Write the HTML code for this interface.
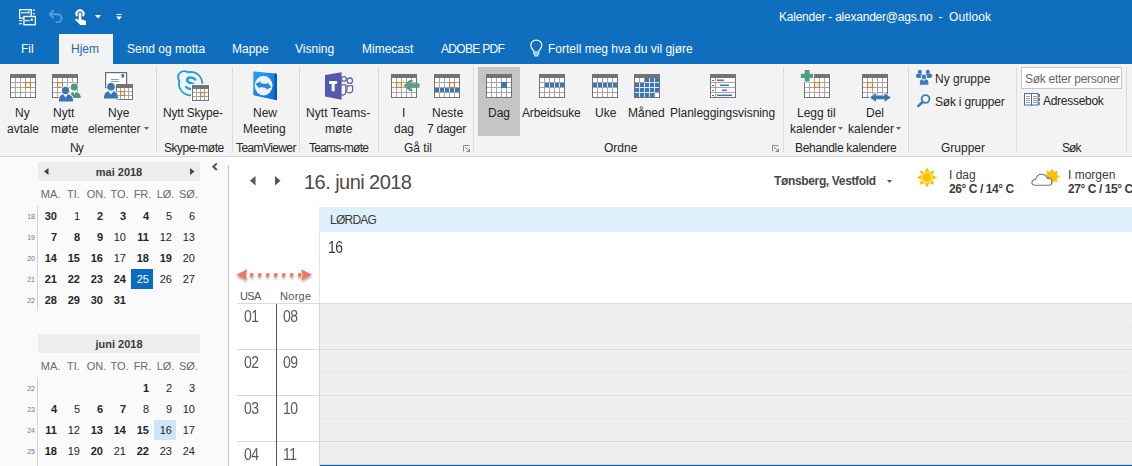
<!DOCTYPE html>
<html><head><meta charset="utf-8">
<style>
*{margin:0;padding:0;box-sizing:border-box}
html,body{width:1132px;height:466px;overflow:hidden;background:#fff;font-family:"Liberation Sans",sans-serif;font-size:12px;color:#262626}
.a{position:absolute;white-space:nowrap;line-height:1}
svg{overflow:visible}
</style></head><body>
<div style="position:absolute;left:0px;top:0px;width:1132px;height:64px;background:#106EBE;"></div>
<div style="position:absolute;left:59px;top:34px;width:54px;height:30px;background:#F3F3F3;"></div>
<div class="a" style="left:779px;top:11px;font-size:12px;color:#fff;letter-spacing:-0.23px">Kalender - alexander@ags.no</div>
<div class="a" style="left:938.5px;top:11px;font-size:12px;color:#fff">-</div>
<div class="a" style="left:949px;top:11px;font-size:12px;color:#fff;letter-spacing:0.1px">Outlook</div>
<div class="a" style="left:21px;top:43px;font-size:12px;color:#fff">Fil</div>
<div class="a" style="left:127px;top:43px;font-size:12px;color:#fff">Send og motta</div>
<div class="a" style="left:232px;top:43px;font-size:12px;color:#fff">Mappe</div>
<div class="a" style="left:295px;top:43px;font-size:12px;color:#fff">Visning</div>
<div class="a" style="left:362px;top:43px;font-size:12px;color:#fff">Mimecast</div>
<div class="a" style="left:441px;top:43px;font-size:12px;color:#fff;letter-spacing:-0.7px">ADOBE PDF</div>
<div class="a" style="left:548px;top:43px;font-size:12px;color:#fff">Fortell meg hva du vil gjøre</div>
<div class="a" style="left:71px;top:43px;font-size:12px;color:#2866B0">Hjem</div>
<svg style="position:absolute;left:19px;top:9px" width="17" height="16" viewBox="0 0 17 16"><rect x="0.65" y="0.65" width="11.6" height="8.5" fill="none" stroke="#fff" stroke-width="1.3"/>
<rect x="4.95" y="7.45" width="11.4" height="8.3" fill="#106EBE" stroke="#fff" stroke-width="1.3"/>
<g fill="#fff"><rect x="2.1" y="3.2" width="5.9" height="1.1"/><rect x="8.5" y="2.3" width="2.1" height="2.2"/>
<rect x="13.8" y="0.6" width="2.1" height="1.1"/><rect x="13.8" y="4.2" width="2.1" height="1.1"/>
<rect x="5.8" y="11.1" width="4.8" height="1.1"/><rect x="11.7" y="9.6" width="2.1" height="2.2"/>
<rect x="0" y="11.1" width="3.2" height="1.1"/><rect x="0" y="14.2" width="3.2" height="1.1"/></g></svg>
<svg style="position:absolute;left:0px;top:0px" width="1" height="1" viewBox="0 0 1 1"><path d="M53.9 10 L49.7 14.2 L53.7 18.3 M50 14.2 H57.6 A3.95 3.95 0 0 1 57.6 22.1 H55.8" fill="none" stroke="#4F9DE2" stroke-width="1.9"/></svg>
<svg style="position:absolute;left:74px;top:8px" width="14" height="18" viewBox="0 0 14 18"><path d="M3.4 8.2 A3.5 3.5 0 1 1 8.6 8.2" fill="none" stroke="#fff" stroke-width="2"/><rect x="3.9" y="3.7" width="4.2" height="9.5" rx="2" fill="#106EBE"/><rect x="4.7" y="4.5" width="2.6" height="9" rx="1.3" fill="#fff"/><path d="M0.9 11.4 Q1.8 10.3 2.9 11 L4.7 12.4 V11 H7.3 V11.6 L11.2 12.4 Q12 12.6 12 13.6 V17 H6.3 Z" fill="#fff"/></svg>
<svg style="position:absolute;left:95px;top:15px" width="6" height="4" viewBox="0 0 6 4"><path d="M0 0 H6 L3 3.5 Z" fill="#fff"/></svg>
<svg style="position:absolute;left:116px;top:14px" width="6" height="7" viewBox="0 0 6 7"><rect x="0.5" y="0" width="5" height="1" fill="#fff"/><path d="M0 2.5 H6 L3 6 Z" fill="#fff"/></svg>
<div style="position:absolute;left:0px;top:64px;width:1132px;height:92px;background:#F3F3F3;"></div>
<div style="position:absolute;left:0px;top:156px;width:1132px;height:1px;background:#D5D5D5;"></div>
<div style="position:absolute;left:156px;top:67px;width:1px;height:85px;background:#DCDCDC;"></div>
<div style="position:absolute;left:232px;top:67px;width:1px;height:85px;background:#DCDCDC;"></div>
<div style="position:absolute;left:299px;top:67px;width:1px;height:85px;background:#DCDCDC;"></div>
<div style="position:absolute;left:378px;top:67px;width:1px;height:85px;background:#DCDCDC;"></div>
<div style="position:absolute;left:473px;top:67px;width:1px;height:85px;background:#DCDCDC;"></div>
<div style="position:absolute;left:783px;top:67px;width:1px;height:85px;background:#DCDCDC;"></div>
<div style="position:absolute;left:908px;top:67px;width:1px;height:85px;background:#DCDCDC;"></div>
<div style="position:absolute;left:1016px;top:67px;width:1px;height:85px;background:#DCDCDC;"></div>
<div style="position:absolute;left:1126px;top:67px;width:1px;height:85px;background:#DCDCDC;"></div>
<div class="a" style="left:15px;top:107px;font-size:12px;color:#262626">Ny</div>
<div class="a" style="left:7px;top:123px;font-size:12px;color:#262626">avtale</div>
<div class="a" style="left:53px;top:107px;font-size:12px;color:#262626">Nytt</div>
<div class="a" style="left:51px;top:123px;font-size:12px;color:#262626">møte</div>
<div class="a" style="left:108px;top:107px;font-size:12px;color:#262626">Nye</div>
<div class="a" style="left:88px;top:123px;font-size:12px;color:#262626;letter-spacing:-0.1px">elementer</div>
<svg style="position:absolute;left:144px;top:127px" width="5" height="3" viewBox="0 0 5 3"><path d="M0 0 H5 L2.5 3 Z" fill="#6A6A6A"/></svg>
<div class="a" style="left:70px;top:142px;font-size:12px;color:#262626;letter-spacing:-1px">Ny</div>
<div class="a" style="left:163px;top:107px;font-size:12px;color:#262626;letter-spacing:-0.2px">Nytt Skype-</div>
<div class="a" style="left:180px;top:123px;font-size:12px;color:#262626">møte</div>
<div class="a" style="left:164px;top:142px;font-size:12px;color:#262626;letter-spacing:-0.5px">Skype-møte</div>
<div class="a" style="left:253px;top:107px;font-size:12px;color:#262626">New</div>
<div class="a" style="left:243px;top:123px;font-size:12px;color:#262626">Meeting</div>
<div class="a" style="left:236px;top:142px;font-size:12px;color:#262626;letter-spacing:-0.6px">TeamViewer</div>
<div class="a" style="left:306px;top:107px;font-size:12px;color:#262626;letter-spacing:0.05px">Nytt Teams-</div>
<div class="a" style="left:325px;top:123px;font-size:12px;color:#262626">møte</div>
<div class="a" style="left:309px;top:142px;font-size:12px;color:#262626;letter-spacing:-0.75px">Teams-møte</div>
<div class="a" style="left:402px;top:107px;font-size:12px;color:#262626">I</div>
<div class="a" style="left:394px;top:123px;font-size:12px;color:#262626">dag</div>
<div class="a" style="left:432px;top:107px;font-size:12px;color:#262626">Neste</div>
<div class="a" style="left:427px;top:123px;font-size:12px;color:#262626;letter-spacing:-0.25px">7 dager</div>
<div class="a" style="left:404px;top:142px;font-size:12px;color:#262626">Gå til</div>
<div style="position:absolute;left:478px;top:67px;width:42px;height:69px;background:#C5C5C5;"></div>
<div class="a" style="left:488px;top:107px;font-size:12px;color:#262626">Dag</div>
<div class="a" style="left:522px;top:107px;font-size:12px;color:#262626;letter-spacing:-0.15px">Arbeidsuke</div>
<div class="a" style="left:595px;top:107px;font-size:12px;color:#262626">Uke</div>
<div class="a" style="left:628px;top:107px;font-size:12px;color:#262626">Måned</div>
<div class="a" style="left:670px;top:107px;font-size:12px;color:#262626;letter-spacing:-0.05px">Planleggingsvisning</div>
<div class="a" style="left:604px;top:142px;font-size:12px;color:#262626">Ordne</div>
<div class="a" style="left:797px;top:107px;font-size:12px;color:#262626">Legg til</div>
<div class="a" style="left:790px;top:123px;font-size:12px;color:#262626">kalender</div>
<svg style="position:absolute;left:838px;top:127px" width="5" height="3" viewBox="0 0 5 3"><path d="M0 0 H5 L2.5 3 Z" fill="#6A6A6A"/></svg>
<div class="a" style="left:866px;top:107px;font-size:12px;color:#262626">Del</div>
<div class="a" style="left:848px;top:123px;font-size:12px;color:#262626">kalender</div>
<svg style="position:absolute;left:896px;top:127px" width="5" height="3" viewBox="0 0 5 3"><path d="M0 0 H5 L2.5 3 Z" fill="#6A6A6A"/></svg>
<div class="a" style="left:795px;top:142px;font-size:12px;color:#262626;letter-spacing:-0.3px">Behandle kalendere</div>
<div class="a" style="left:935px;top:73px;font-size:12px;color:#262626">Ny gruppe</div>
<div class="a" style="left:935px;top:96px;font-size:12px;color:#262626;letter-spacing:-0.2px">Søk i grupper</div>
<div class="a" style="left:941px;top:142px;font-size:12px;color:#262626">Grupper</div>
<div style="position:absolute;left:1021px;top:67px;width:101px;height:22px;background:#fff;border:1px solid #C6C6C6"></div>
<div class="a" style="left:1025px;top:73px;font-size:12px;color:#6A6A6A;letter-spacing:-0.27px">Søk etter personer</div>
<div class="a" style="left:1043px;top:95px;font-size:12px;color:#262626;letter-spacing:-0.28px">Adressebok</div>
<div class="a" style="left:1062px;top:142px;font-size:12px;color:#262626;letter-spacing:-0.9px">Søk</div>
<svg style="position:absolute;left:463px;top:145px" width="7" height="7" viewBox="0 0 7 7"><path d="M0.5 6.5 V0.5 H6.5" fill="none" stroke="#8A8A8A"/><path d="M2 2 L6.5 6.5 M3.5 6.5 H6.5 V3.5" fill="none" stroke="#8A8A8A"/></svg>
<svg style="position:absolute;left:772px;top:145px" width="7" height="7" viewBox="0 0 7 7"><path d="M0.5 6.5 V0.5 H6.5" fill="none" stroke="#8A8A8A"/><path d="M2 2 L6.5 6.5 M3.5 6.5 H6.5 V3.5" fill="none" stroke="#8A8A8A"/></svg>
<svg style="position:absolute;left:10px;top:74px" width="26" height="24" viewBox="0 0 26 24"><rect x="0" y="0" width="26" height="24" fill="#fff"/><rect x="5" y="4" width="1" height="20" fill="#A6A6A6"/><rect x="10" y="4" width="1" height="20" fill="#A6A6A6"/><rect x="15" y="4" width="1" height="20" fill="#A6A6A6"/><rect x="20" y="4" width="1" height="20" fill="#A6A6A6"/><rect x="0" y="8" width="26" height="1" fill="#A6A6A6"/><rect x="0" y="13" width="26" height="1" fill="#A6A6A6"/><rect x="0" y="18" width="26" height="1" fill="#A6A6A6"/><rect x="0.5" y="0.5" width="25" height="23" fill="none" stroke="#737373"/><rect x="0" y="0" width="26" height="4" fill="#737373"/><rect x="15.55" y="8.55" width="4.9" height="4.9" fill="#FFF6E6" stroke="#CF7F3A" stroke-width="1.1"/></svg>
<svg style="position:absolute;left:52px;top:74px" width="26" height="24" viewBox="0 0 26 24"><rect x="0" y="0" width="26" height="24" fill="#fff"/><rect x="5" y="4" width="1" height="20" fill="#A6A6A6"/><rect x="10" y="4" width="1" height="20" fill="#A6A6A6"/><rect x="15" y="4" width="1" height="20" fill="#A6A6A6"/><rect x="20" y="4" width="1" height="20" fill="#A6A6A6"/><rect x="0" y="8" width="26" height="1" fill="#A6A6A6"/><rect x="0" y="13" width="26" height="1" fill="#A6A6A6"/><rect x="0" y="18" width="26" height="1" fill="#A6A6A6"/><rect x="0.5" y="0.5" width="25" height="23" fill="none" stroke="#737373"/><rect x="0" y="0" width="26" height="4" fill="#737373"/><rect x="5.55" y="8.55" width="4.9" height="4.9" fill="#FFF6E6" stroke="#CF7F3A" stroke-width="1.1"/>
<circle cx="22.3" cy="12.9" r="4.4" fill="#F3F3F3"/><path d="M17.1 25 C17.1 20 18.8 17 21.3 17 H23.7 C26.5 17 29.9 19.5 29.9 25 Z" fill="#F3F3F3"/>
<circle cx="22.3" cy="12.9" r="3.5" fill="#4A9A7C"/><path d="M18.1 24.1 C18.1 20.5 19.5 18 21.3 18 L22.5 20.5 L23.7 18 C26 18 28.9 20 28.9 24.1 Z" fill="#4A9A7C"/>
<circle cx="13.5" cy="16.4" r="4.6" fill="#F3F3F3"/><path d="M5.9 28.6 C5.9 22.5 8 19.6 11.2 19.6 H15.8 C19.5 19.6 22.2 22.5 22.2 28.6 Z" fill="#F3F3F3"/>
<circle cx="13.5" cy="16.4" r="3.6" fill="#3A75B5"/><path d="M6.9 27.6 C6.9 23 8.5 20.6 11.2 20.6 L13.5 23.6 L15.8 20.6 C18.8 20.6 21.2 23 21.2 27.6 Z" fill="#3A75B5"/></svg>
<svg style="position:absolute;left:104px;top:71px" width="30" height="30" viewBox="0 0 30 30"><rect x="1.6" y="1.6" width="21" height="15" fill="#fff" stroke="#6A6A6A" stroke-width="1.2"/>
<rect x="17.5" y="3" width="2.6" height="3.6" fill="#3A75B5"/><rect x="7" y="8" width="8" height="1" fill="#9A9A9A"/><rect x="7" y="10" width="8" height="1" fill="#9A9A9A"/>
<g transform="translate(12,13)"><rect x="0" y="0" width="17" height="16" fill="#fff"/><rect x="4" y="4" width="1" height="12" fill="#A6A6A6"/><rect x="8" y="4" width="1" height="12" fill="#A6A6A6"/><rect x="12" y="4" width="1" height="12" fill="#A6A6A6"/><rect x="0" y="7" width="17" height="1" fill="#A6A6A6"/><rect x="0" y="11" width="17" height="1" fill="#A6A6A6"/><rect x="0.5" y="0.5" width="16" height="15" fill="none" stroke="#737373"/><rect x="0" y="0" width="17" height="4" fill="#737373"/><rect x="4.55" y="7.55" width="3.9" height="3.9" fill="#FFF6E6" stroke="#CF7F3A" stroke-width="1.1"/></g>
<circle cx="7" cy="15.7" r="4.6" fill="#F3F3F3"/><path d="M-1 28.4 C-1 22.5 1.2 19.6 4.6 19.6 H9.4 C12.8 19.6 15 22.5 15 28.4 Z" fill="#F3F3F3"/>
<circle cx="7" cy="15.7" r="3.8" fill="#3A75B5"/><path d="M0 27.5 C0 23 1.8 20.6 4.6 20.6 L7 23.6 L9.4 20.6 C12.2 20.6 14 23 14 27.5 Z" fill="#3A75B5"/></svg>
<svg style="position:absolute;left:177px;top:70px" width="32" height="32" viewBox="0 0 32 32"><g fill="none" stroke="#1AA0E0" stroke-width="1.9"><circle cx="13.6" cy="13.6" r="11.6"/><circle cx="7.3" cy="7.3" r="6.2"/><circle cx="19.9" cy="19.9" r="6.2"/></g>
<g fill="#F3F3F3"><circle cx="13.6" cy="13.6" r="10.65"/><circle cx="7.3" cy="7.3" r="5.25"/><circle cx="19.9" cy="19.9" r="5.25"/></g>
<path d="M18.2 9.6 C16.2 6.6 10 6.8 10 10.3 C10 13.6 18 12.6 18 16.2 C18 19.8 11.5 19.8 9.2 17" fill="none" stroke="#1AA0E0" stroke-width="2.4" stroke-linecap="round"/>
<g transform="translate(15,15)"><rect x="-1" y="-1" width="19" height="18" fill="#fff"/><rect x="0" y="0" width="17" height="16" fill="#fff"/><rect x="4" y="4" width="1" height="12" fill="#A6A6A6"/><rect x="8" y="4" width="1" height="12" fill="#A6A6A6"/><rect x="12" y="4" width="1" height="12" fill="#A6A6A6"/><rect x="0" y="7" width="17" height="1" fill="#A6A6A6"/><rect x="0" y="11" width="17" height="1" fill="#A6A6A6"/><rect x="0.5" y="0.5" width="16" height="15" fill="none" stroke="#737373"/><rect x="0" y="0" width="17" height="4" fill="#737373"/><rect x="8.55" y="7.55" width="3.9" height="3.9" fill="#FFF6E6" stroke="#CF7F3A" stroke-width="1.1"/></g></svg>
<svg style="position:absolute;left:250px;top:70px" width="30" height="32" viewBox="0 0 30 32"><defs><linearGradient id="tvg" x1="0" y1="0" x2="1" y2="1"><stop offset="0" stop-color="#2AA4F0"/><stop offset="1" stop-color="#0A66D2"/></linearGradient></defs>
<path d="M3.2 1.3 L25.8 3.6 Q27 3.7 27 5 V29 Q27 30.4 25.7 30.1 L4.4 25.4 Q3.3 25.2 3.3 24 V2.4 Q3.3 1.2 3.2 1.3 Z" fill="url(#tvg)"/>
<path d="M24.6 3.4 L25.8 3.6 Q27 3.7 27 5 V29 Q27 30.4 25.7 30.1 L24.6 29.9 Z" fill="#0757B8"/>
<ellipse cx="13.6" cy="15.6" rx="8.9" ry="9.8" fill="#EDF2F8"/>
<path d="M5.4 15.1 L10.2 11.6 V13.6 H16.8 V11.9 L21.6 16.2 L16.7 19.4 V17.5 H10.2 V19.3 Z" fill="#2A86D6" transform="rotate(7 13.5 15.5)"/></svg>
<svg style="position:absolute;left:324px;top:72px" width="30" height="29" viewBox="0 0 30 29"><g fill="#fff" stroke="#6264A7" stroke-width="1.3">
<path d="M23.4 13.9 H28.6 V17.6 Q28.6 20.9 25.6 20.9 Q23.4 20.9 22.6 19.5 Z"/>
<circle cx="25.8" cy="8.7" r="2.7"/>
<path d="M16 12.8 H21.8 V19.5 Q21.8 23 18 23 Q16.5 23 15.5 22.3 Z"/>
<circle cx="19.9" cy="6.9" r="2.3"/></g>
<path d="M1 3 L17.6 0.2 V27.7 L1 24.6 Z" fill="#5558AF"/>
<path d="M5.1 9.1 H13.1 V12 H10.7 V19.2 H7.6 V12 H5.1 Z" fill="#fff"/></svg>
<svg style="position:absolute;left:391px;top:74px" width="26" height="24" viewBox="0 0 26 24"><rect x="0" y="0" width="26" height="24" fill="#fff"/><rect x="5" y="4" width="1" height="20" fill="#A6A6A6"/><rect x="10" y="4" width="1" height="20" fill="#A6A6A6"/><rect x="15" y="4" width="1" height="20" fill="#A6A6A6"/><rect x="20" y="4" width="1" height="20" fill="#A6A6A6"/><rect x="0" y="8" width="26" height="1" fill="#A6A6A6"/><rect x="0" y="13" width="26" height="1" fill="#A6A6A6"/><rect x="0" y="18" width="26" height="1" fill="#A6A6A6"/><rect x="0.5" y="0.5" width="25" height="23" fill="none" stroke="#737373"/><rect x="0" y="0" width="26" height="4" fill="#737373"/><rect x="5.55" y="8.55" width="4.9" height="4.9" fill="#FFF6E6" stroke="#CF7F3A" stroke-width="1.1"/><path d="M12.5 11.5 L18.5 6 H22.5 L19 9.3 H28.5 V13.7 H19 L22.5 17 H18.5 Z" fill="#5A9E86"/></svg>
<svg style="position:absolute;left:434px;top:74px" width="26" height="24" viewBox="0 0 26 24"><rect x="0" y="0" width="26" height="24" fill="#fff"/><rect x="1" y="14" width="4" height="4" fill="#3B76B6"/><rect x="6" y="14" width="4" height="4" fill="#3B76B6"/><rect x="11" y="14" width="4" height="4" fill="#3B76B6"/><rect x="16" y="14" width="4" height="4" fill="#3B76B6"/><rect x="21" y="14" width="4" height="4" fill="#3B76B6"/><rect x="5" y="4" width="1" height="20" fill="#A6A6A6"/><rect x="10" y="4" width="1" height="20" fill="#A6A6A6"/><rect x="15" y="4" width="1" height="20" fill="#A6A6A6"/><rect x="20" y="4" width="1" height="20" fill="#A6A6A6"/><rect x="0" y="8" width="26" height="1" fill="#A6A6A6"/><rect x="0" y="13" width="26" height="1" fill="#A6A6A6"/><rect x="0" y="18" width="26" height="1" fill="#A6A6A6"/><rect x="5" y="14" width="1" height="4" fill="#DDE8F3"/><rect x="10" y="14" width="1" height="4" fill="#DDE8F3"/><rect x="15" y="14" width="1" height="4" fill="#DDE8F3"/><rect x="20" y="14" width="1" height="4" fill="#DDE8F3"/><rect x="0.5" y="0.5" width="25" height="23" fill="none" stroke="#737373"/><rect x="0" y="0" width="26" height="4" fill="#737373"/><rect x="15.55" y="8.55" width="4.9" height="4.9" fill="#FFF6E6" stroke="#CF7F3A" stroke-width="1.1"/></svg>
<svg style="position:absolute;left:486px;top:74px" width="26" height="24" viewBox="0 0 26 24"><rect x="0" y="0" width="26" height="24" fill="#fff"/><rect x="5" y="4" width="1" height="20" fill="#A6A6A6"/><rect x="10" y="4" width="1" height="20" fill="#A6A6A6"/><rect x="15" y="4" width="1" height="20" fill="#A6A6A6"/><rect x="20" y="4" width="1" height="20" fill="#A6A6A6"/><rect x="0" y="8" width="26" height="1" fill="#A6A6A6"/><rect x="0" y="13" width="26" height="1" fill="#A6A6A6"/><rect x="0" y="18" width="26" height="1" fill="#A6A6A6"/><rect x="0.5" y="0.5" width="25" height="23" fill="none" stroke="#737373"/><rect x="0" y="0" width="26" height="4" fill="#737373"/><rect x="15" y="8" width="6" height="6" fill="#3B76B6"/></svg>
<svg style="position:absolute;left:539px;top:74px" width="26" height="24" viewBox="0 0 26 24"><rect x="0" y="0" width="26" height="24" fill="#fff"/><rect x="6" y="9" width="4" height="4" fill="#3B76B6"/><rect x="11" y="9" width="4" height="4" fill="#3B76B6"/><rect x="16" y="9" width="4" height="4" fill="#3B76B6"/><rect x="21" y="9" width="4" height="4" fill="#3B76B6"/><rect x="5" y="4" width="1" height="20" fill="#A6A6A6"/><rect x="10" y="4" width="1" height="20" fill="#A6A6A6"/><rect x="15" y="4" width="1" height="20" fill="#A6A6A6"/><rect x="20" y="4" width="1" height="20" fill="#A6A6A6"/><rect x="0" y="8" width="26" height="1" fill="#A6A6A6"/><rect x="0" y="13" width="26" height="1" fill="#A6A6A6"/><rect x="0" y="18" width="26" height="1" fill="#A6A6A6"/><rect x="10" y="9" width="1" height="4" fill="#DDE8F3"/><rect x="15" y="9" width="1" height="4" fill="#DDE8F3"/><rect x="20" y="9" width="1" height="4" fill="#DDE8F3"/><rect x="0.5" y="0.5" width="25" height="23" fill="none" stroke="#737373"/><rect x="0" y="0" width="26" height="4" fill="#737373"/></svg>
<svg style="position:absolute;left:592px;top:74px" width="26" height="24" viewBox="0 0 26 24"><rect x="0" y="0" width="26" height="24" fill="#fff"/><rect x="1" y="9" width="4" height="4" fill="#3B76B6"/><rect x="6" y="9" width="4" height="4" fill="#3B76B6"/><rect x="11" y="9" width="4" height="4" fill="#3B76B6"/><rect x="16" y="9" width="4" height="4" fill="#3B76B6"/><rect x="21" y="9" width="4" height="4" fill="#3B76B6"/><rect x="5" y="4" width="1" height="20" fill="#A6A6A6"/><rect x="10" y="4" width="1" height="20" fill="#A6A6A6"/><rect x="15" y="4" width="1" height="20" fill="#A6A6A6"/><rect x="20" y="4" width="1" height="20" fill="#A6A6A6"/><rect x="0" y="8" width="26" height="1" fill="#A6A6A6"/><rect x="0" y="13" width="26" height="1" fill="#A6A6A6"/><rect x="0" y="18" width="26" height="1" fill="#A6A6A6"/><rect x="5" y="9" width="1" height="4" fill="#DDE8F3"/><rect x="10" y="9" width="1" height="4" fill="#DDE8F3"/><rect x="15" y="9" width="1" height="4" fill="#DDE8F3"/><rect x="20" y="9" width="1" height="4" fill="#DDE8F3"/><rect x="0.5" y="0.5" width="25" height="23" fill="none" stroke="#737373"/><rect x="0" y="0" width="26" height="4" fill="#737373"/></svg>
<svg style="position:absolute;left:634px;top:74px" width="26" height="24" viewBox="0 0 26 24"><rect x="0" y="0" width="26" height="24" fill="#fff"/><rect x="11" y="4" width="4" height="4" fill="#3B76B6"/><rect x="16" y="4" width="4" height="4" fill="#3B76B6"/><rect x="21" y="4" width="4" height="4" fill="#3B76B6"/><rect x="1" y="9" width="4" height="4" fill="#3B76B6"/><rect x="6" y="9" width="4" height="4" fill="#3B76B6"/><rect x="11" y="9" width="4" height="4" fill="#3B76B6"/><rect x="16" y="9" width="4" height="4" fill="#3B76B6"/><rect x="21" y="9" width="4" height="4" fill="#3B76B6"/><rect x="1" y="14" width="4" height="4" fill="#3B76B6"/><rect x="6" y="14" width="4" height="4" fill="#3B76B6"/><rect x="11" y="14" width="4" height="4" fill="#3B76B6"/><rect x="16" y="14" width="4" height="4" fill="#3B76B6"/><rect x="21" y="14" width="4" height="4" fill="#3B76B6"/><rect x="1" y="19" width="4" height="4" fill="#3B76B6"/><rect x="6" y="19" width="4" height="4" fill="#3B76B6"/><rect x="11" y="19" width="4" height="4" fill="#3B76B6"/><rect x="16" y="19" width="4" height="4" fill="#3B76B6"/><rect x="5" y="4" width="1" height="20" fill="#A6A6A6"/><rect x="10" y="4" width="1" height="20" fill="#A6A6A6"/><rect x="15" y="4" width="1" height="20" fill="#A6A6A6"/><rect x="20" y="4" width="1" height="20" fill="#A6A6A6"/><rect x="0" y="8" width="26" height="1" fill="#A6A6A6"/><rect x="0" y="13" width="26" height="1" fill="#A6A6A6"/><rect x="0" y="18" width="26" height="1" fill="#A6A6A6"/><rect x="15" y="4" width="1" height="4" fill="#DDE8F3"/><rect x="11" y="8" width="4" height="1" fill="#DDE8F3"/><rect x="15" y="8" width="1" height="1" fill="#DDE8F3"/><rect x="20" y="4" width="1" height="4" fill="#DDE8F3"/><rect x="16" y="8" width="4" height="1" fill="#DDE8F3"/><rect x="20" y="8" width="1" height="1" fill="#DDE8F3"/><rect x="21" y="8" width="4" height="1" fill="#DDE8F3"/><rect x="5" y="9" width="1" height="4" fill="#DDE8F3"/><rect x="1" y="13" width="4" height="1" fill="#DDE8F3"/><rect x="5" y="13" width="1" height="1" fill="#DDE8F3"/><rect x="10" y="9" width="1" height="4" fill="#DDE8F3"/><rect x="6" y="13" width="4" height="1" fill="#DDE8F3"/><rect x="10" y="13" width="1" height="1" fill="#DDE8F3"/><rect x="15" y="9" width="1" height="4" fill="#DDE8F3"/><rect x="11" y="13" width="4" height="1" fill="#DDE8F3"/><rect x="15" y="13" width="1" height="1" fill="#DDE8F3"/><rect x="20" y="9" width="1" height="4" fill="#DDE8F3"/><rect x="16" y="13" width="4" height="1" fill="#DDE8F3"/><rect x="20" y="13" width="1" height="1" fill="#DDE8F3"/><rect x="21" y="13" width="4" height="1" fill="#DDE8F3"/><rect x="5" y="14" width="1" height="4" fill="#DDE8F3"/><rect x="1" y="18" width="4" height="1" fill="#DDE8F3"/><rect x="5" y="18" width="1" height="1" fill="#DDE8F3"/><rect x="10" y="14" width="1" height="4" fill="#DDE8F3"/><rect x="6" y="18" width="4" height="1" fill="#DDE8F3"/><rect x="10" y="18" width="1" height="1" fill="#DDE8F3"/><rect x="15" y="14" width="1" height="4" fill="#DDE8F3"/><rect x="11" y="18" width="4" height="1" fill="#DDE8F3"/><rect x="15" y="18" width="1" height="1" fill="#DDE8F3"/><rect x="20" y="14" width="1" height="4" fill="#DDE8F3"/><rect x="16" y="18" width="4" height="1" fill="#DDE8F3"/><rect x="5" y="19" width="1" height="4" fill="#DDE8F3"/><rect x="10" y="19" width="1" height="4" fill="#DDE8F3"/><rect x="15" y="19" width="1" height="4" fill="#DDE8F3"/><rect x="0.5" y="0.5" width="25" height="23" fill="none" stroke="#737373"/><rect x="0" y="0" width="26" height="4" fill="#737373"/></svg>
<svg style="position:absolute;left:710px;top:74px" width="26" height="24" viewBox="0 0 26 24"><rect x="0" y="0" width="26" height="24" fill="#fff"/><rect x="0" y="8" width="26" height="1" fill="#A6A6A6"/><rect x="0" y="13" width="26" height="1" fill="#A6A6A6"/><rect x="0" y="18" width="26" height="1" fill="#A6A6A6"/><rect x="5" y="4" width="1" height="20" fill="#A6A6A6"/><rect x="2" y="6" width="2" height="1" fill="#666"/><rect x="2" y="11" width="2" height="1" fill="#666"/><rect x="2" y="16" width="2" height="1" fill="#666"/><rect x="2" y="21" width="2" height="1" fill="#666"/><rect x="7" y="5.5" width="7" height="1.6" fill="#8A5AA8"/><rect x="10" y="10.5" width="9" height="1.6" fill="#3A75B5"/><rect x="12" y="15.5" width="5" height="1.6" fill="#8A5AA8"/><rect x="7" y="20.5" width="15" height="1.6" fill="#3A75B5"/><rect x="0.5" y="0.5" width="25" height="23" fill="none" stroke="#737373"/><rect x="0" y="0" width="26" height="4" fill="#737373"/></svg>
<svg style="position:absolute;left:804px;top:74px" width="26" height="24" viewBox="0 0 26 24"><rect x="0" y="0" width="26" height="24" fill="#fff"/><rect x="5" y="4" width="1" height="20" fill="#A6A6A6"/><rect x="10" y="4" width="1" height="20" fill="#A6A6A6"/><rect x="15" y="4" width="1" height="20" fill="#A6A6A6"/><rect x="20" y="4" width="1" height="20" fill="#A6A6A6"/><rect x="0" y="8" width="26" height="1" fill="#A6A6A6"/><rect x="0" y="13" width="26" height="1" fill="#A6A6A6"/><rect x="0" y="18" width="26" height="1" fill="#A6A6A6"/><rect x="0.5" y="0.5" width="25" height="23" fill="none" stroke="#737373"/><rect x="0" y="0" width="26" height="4" fill="#737373"/><rect x="10.55" y="8.55" width="4.9" height="4.9" fill="#FFF6E6" stroke="#CF7F3A" stroke-width="1.1"/><path d="M-0.3 -5.1 H6.6 V-1.2 H10 V5.1 H6.6 V8.5 H-0.3 Z" fill="#F3F3F3"/><path d="M-4.2 -1.2 H-0.3 V5.1 H-4.2 Z" fill="#F3F3F3"/><path d="M0.7 -4.1 H5.6 V-0.2 H9 V4.1 H5.6 V7.5 H0.7 V4.1 H-3.2 V-0.2 H0.7 Z" fill="#4E9C83"/></svg>
<svg style="position:absolute;left:862px;top:74px" width="26" height="24" viewBox="0 0 26 24"><rect x="0" y="0" width="26" height="24" fill="#fff"/><rect x="5" y="4" width="1" height="20" fill="#A6A6A6"/><rect x="10" y="4" width="1" height="20" fill="#A6A6A6"/><rect x="15" y="4" width="1" height="20" fill="#A6A6A6"/><rect x="20" y="4" width="1" height="20" fill="#A6A6A6"/><rect x="0" y="8" width="26" height="1" fill="#A6A6A6"/><rect x="0" y="13" width="26" height="1" fill="#A6A6A6"/><rect x="0" y="18" width="26" height="1" fill="#A6A6A6"/><rect x="0.5" y="0.5" width="25" height="23" fill="none" stroke="#737373"/><rect x="0" y="0" width="26" height="4" fill="#737373"/><rect x="5.55" y="8.55" width="4.9" height="4.9" fill="#FFF6E6" stroke="#CF7F3A" stroke-width="1.1"/><path d="M8 23.4 L13.9 19 V21.5 H22.6 V19 L28.8 23.4 L22.6 27.7 V25.2 H13.9 V27.7 Z" fill="#3A75B5" stroke="#F3F3F3" stroke-width="1.6" paint-order="stroke"/></svg>
<svg style="position:absolute;left:916px;top:70px" width="17" height="15" viewBox="0 0 17 15"><g fill="#3F7CBC"><circle cx="3.9" cy="1.9" r="2.1"/><circle cx="11.8" cy="1.9" r="2.1"/>
<ellipse cx="3.4" cy="5.7" rx="3.5" ry="2.3"/><ellipse cx="12.5" cy="5.7" rx="3.7" ry="2.3"/></g>
<circle cx="7.9" cy="6.9" r="3.1" fill="#F3F3F3"/><path d="M3 15 V11.5 Q3 7.8 7.9 7.8 Q13.2 7.8 13.2 11.5 V15 Z" fill="#F3F3F3"/>
<g fill="#3F7CBC"><circle cx="7.9" cy="6.9" r="2.3"/><path d="M3.9 14.8 V11.8 Q3.9 9.3 6.2 9.2 L7.9 11 L9.6 9.2 Q12.3 9.3 12.3 11.8 V14.8 Z"/></g></svg>
<svg style="position:absolute;left:917px;top:94px" width="14" height="13" viewBox="0 0 14 13"><circle cx="8.5" cy="5" r="3.9" fill="none" stroke="#3F7CBC" stroke-width="1.8"/><path d="M6 7.8 L1.3 12" stroke="#3F7CBC" stroke-width="2.6" stroke-linecap="round"/></svg>
<svg style="position:absolute;left:1024px;top:93px" width="16" height="13" viewBox="0 0 16 13"><rect x="0.5" y="0.5" width="7" height="11.5" fill="#fff" stroke="#3F6EA8"/><rect x="7.5" y="0.5" width="6.5" height="11.5" fill="#fff" stroke="#3F6EA8"/>
<g fill="#A0A0A0"><rect x="2" y="3" width="4" height="1"/><rect x="2" y="5" width="4" height="1"/><rect x="2" y="7" width="4" height="1"/><rect x="2" y="9" width="4" height="1"/>
<rect x="9" y="3" width="4" height="1"/><rect x="9" y="5" width="4" height="1"/><rect x="9" y="7" width="4" height="1"/><rect x="9" y="9" width="4" height="1"/></g>
<rect x="14.3" y="1" width="1.7" height="3" fill="#C9572E"/><rect x="14.3" y="5" width="1.7" height="3" fill="#3F7CBC"/><rect x="14.3" y="9" width="1.7" height="3" fill="#4E9C83"/></svg>
<svg style="position:absolute;left:530px;top:39px" width="13" height="18" viewBox="0 0 13 18"><path d="M6.3 1.1 C2.8 1.1 0.8 3.6 0.8 6.3 C0.8 8.6 2.2 10 3.9 12.2 V14.8 H8.7 V12.2 C10.4 10 11.8 8.6 11.8 6.3 C11.8 3.6 9.8 1.1 6.3 1.1 Z" fill="none" stroke="#fff" stroke-width="1.15"/><rect x="3.9" y="12.4" width="4.8" height="1" fill="#fff"/><rect x="4.3" y="16.2" width="4" height="1.2" fill="#fff"/></svg>
<div style="position:absolute;left:0px;top:157px;width:228px;height:309px;background:#FAFAFA;"></div>
<div style="position:absolute;left:228px;top:165px;width:1px;height:301px;background:#C6C6C6;"></div>
<svg style="position:absolute;left:212px;top:163px" width="6" height="8" viewBox="0 0 6 8"><path d="M4.8 0.6 L1.3 3.8 L4.8 7" fill="none" stroke="#555" stroke-width="2"/></svg>
<div style="position:absolute;left:38px;top:162px;width:162px;height:19px;background:#EDEDED;"></div>
<div class="a" style="left:0px;top:167px;font-size:11px;color:#3B3B3B;font-weight:700;width:238px;text-align:center">mai 2018</div>
<svg style="position:absolute;left:44px;top:168px" width="5" height="7" viewBox="0 0 5 7"><path d="M4.5 0 V7 L0 3.5 Z" fill="#444"/></svg>
<svg style="position:absolute;left:190px;top:168px" width="5" height="7" viewBox="0 0 5 7"><path d="M0 0 V7 L4.5 3.5 Z" fill="#444"/></svg>
<div class="a" style="left:39px;top:189px;font-size:11px;color:#6B6B6B;width:23px;text-align:center">MA.</div>
<div class="a" style="left:62px;top:189px;font-size:11px;color:#6B6B6B;width:23px;text-align:center">TI.</div>
<div class="a" style="left:85px;top:189px;font-size:11px;color:#6B6B6B;width:23px;text-align:center">ON.</div>
<div class="a" style="left:108px;top:189px;font-size:11px;color:#6B6B6B;width:23px;text-align:center">TO.</div>
<div class="a" style="left:131px;top:189px;font-size:11px;color:#6B6B6B;width:23px;text-align:center">FR.</div>
<div class="a" style="left:154px;top:189px;font-size:11px;color:#6B6B6B;width:23px;text-align:center">LØ.</div>
<div class="a" style="left:177px;top:189px;font-size:11px;color:#6B6B6B;width:23px;text-align:center">SØ.</div>
<div style="position:absolute;left:37px;top:206px;width:1px;height:104px;background:#D6D6D6;"></div>
<div class="a" style="left:20px;top:212.5px;font-size:7px;color:#777;width:15px;text-align:right">18</div>
<div class="a" style="left:35px;top:211px;font-size:11px;color:#262626;font-weight:700;width:22px;text-align:right">30</div>
<div class="a" style="left:58px;top:211px;font-size:11px;color:#262626;width:22px;text-align:right">1</div>
<div class="a" style="left:81px;top:211px;font-size:11px;color:#262626;font-weight:700;width:22px;text-align:right">2</div>
<div class="a" style="left:104px;top:211px;font-size:11px;color:#262626;font-weight:700;width:22px;text-align:right">3</div>
<div class="a" style="left:127px;top:211px;font-size:11px;color:#262626;font-weight:700;width:22px;text-align:right">4</div>
<div class="a" style="left:150px;top:211px;font-size:11px;color:#262626;width:22px;text-align:right">5</div>
<div class="a" style="left:173px;top:211px;font-size:11px;color:#262626;width:22px;text-align:right">6</div>
<div class="a" style="left:20px;top:233.5px;font-size:7px;color:#777;width:15px;text-align:right">19</div>
<div class="a" style="left:35px;top:232px;font-size:11px;color:#262626;font-weight:700;width:22px;text-align:right">7</div>
<div class="a" style="left:58px;top:232px;font-size:11px;color:#262626;font-weight:700;width:22px;text-align:right">8</div>
<div class="a" style="left:81px;top:232px;font-size:11px;color:#262626;font-weight:700;width:22px;text-align:right">9</div>
<div class="a" style="left:104px;top:232px;font-size:11px;color:#262626;width:22px;text-align:right">10</div>
<div class="a" style="left:127px;top:232px;font-size:11px;color:#262626;font-weight:700;width:22px;text-align:right">11</div>
<div class="a" style="left:150px;top:232px;font-size:11px;color:#262626;width:22px;text-align:right">12</div>
<div class="a" style="left:173px;top:232px;font-size:11px;color:#262626;width:22px;text-align:right">13</div>
<div class="a" style="left:20px;top:254.5px;font-size:7px;color:#777;width:15px;text-align:right">20</div>
<div class="a" style="left:35px;top:253px;font-size:11px;color:#262626;font-weight:700;width:22px;text-align:right">14</div>
<div class="a" style="left:58px;top:253px;font-size:11px;color:#262626;font-weight:700;width:22px;text-align:right">15</div>
<div class="a" style="left:81px;top:253px;font-size:11px;color:#262626;font-weight:700;width:22px;text-align:right">16</div>
<div class="a" style="left:104px;top:253px;font-size:11px;color:#262626;width:22px;text-align:right">17</div>
<div class="a" style="left:127px;top:253px;font-size:11px;color:#262626;font-weight:700;width:22px;text-align:right">18</div>
<div class="a" style="left:150px;top:253px;font-size:11px;color:#262626;font-weight:700;width:22px;text-align:right">19</div>
<div class="a" style="left:173px;top:253px;font-size:11px;color:#262626;width:22px;text-align:right">20</div>
<div class="a" style="left:20px;top:275.5px;font-size:7px;color:#777;width:15px;text-align:right">21</div>
<div class="a" style="left:35px;top:274px;font-size:11px;color:#262626;font-weight:700;width:22px;text-align:right">21</div>
<div class="a" style="left:58px;top:274px;font-size:11px;color:#262626;font-weight:700;width:22px;text-align:right">22</div>
<div class="a" style="left:81px;top:274px;font-size:11px;color:#262626;font-weight:700;width:22px;text-align:right">23</div>
<div class="a" style="left:104px;top:274px;font-size:11px;color:#262626;font-weight:700;width:22px;text-align:right">24</div>
<div style="position:absolute;left:131px;top:269px;width:22px;height:20px;background:#0A6CC0;"></div>
<div class="a" style="left:127px;top:274px;font-size:11px;color:#fff;width:22px;text-align:right">25</div>
<div class="a" style="left:150px;top:274px;font-size:11px;color:#262626;width:22px;text-align:right">26</div>
<div class="a" style="left:173px;top:274px;font-size:11px;color:#262626;width:22px;text-align:right">27</div>
<div class="a" style="left:20px;top:296.5px;font-size:7px;color:#777;width:15px;text-align:right">22</div>
<div class="a" style="left:35px;top:295px;font-size:11px;color:#262626;font-weight:700;width:22px;text-align:right">28</div>
<div class="a" style="left:58px;top:295px;font-size:11px;color:#262626;font-weight:700;width:22px;text-align:right">29</div>
<div class="a" style="left:81px;top:295px;font-size:11px;color:#262626;font-weight:700;width:22px;text-align:right">30</div>
<div class="a" style="left:104px;top:295px;font-size:11px;color:#262626;font-weight:700;width:22px;text-align:right">31</div>
<div style="position:absolute;left:38px;top:334px;width:162px;height:19px;background:#EDEDED;"></div>
<div class="a" style="left:0px;top:339px;font-size:11px;color:#3B3B3B;font-weight:700;width:238px;text-align:center">juni 2018</div>
<div class="a" style="left:39px;top:361px;font-size:11px;color:#6B6B6B;width:23px;text-align:center">MA.</div>
<div class="a" style="left:62px;top:361px;font-size:11px;color:#6B6B6B;width:23px;text-align:center">TI.</div>
<div class="a" style="left:85px;top:361px;font-size:11px;color:#6B6B6B;width:23px;text-align:center">ON.</div>
<div class="a" style="left:108px;top:361px;font-size:11px;color:#6B6B6B;width:23px;text-align:center">TO.</div>
<div class="a" style="left:131px;top:361px;font-size:11px;color:#6B6B6B;width:23px;text-align:center">FR.</div>
<div class="a" style="left:154px;top:361px;font-size:11px;color:#6B6B6B;width:23px;text-align:center">LØ.</div>
<div class="a" style="left:177px;top:361px;font-size:11px;color:#6B6B6B;width:23px;text-align:center">SØ.</div>
<div style="position:absolute;left:37px;top:378px;width:1px;height:88px;background:#D6D6D6;"></div>
<div class="a" style="left:20px;top:384.5px;font-size:7px;color:#777;width:15px;text-align:right">22</div>
<div class="a" style="left:127px;top:383px;font-size:11px;color:#262626;font-weight:700;width:22px;text-align:right">1</div>
<div class="a" style="left:150px;top:383px;font-size:11px;color:#262626;width:22px;text-align:right">2</div>
<div class="a" style="left:173px;top:383px;font-size:11px;color:#262626;width:22px;text-align:right">3</div>
<div class="a" style="left:20px;top:405.5px;font-size:7px;color:#777;width:15px;text-align:right">23</div>
<div class="a" style="left:35px;top:404px;font-size:11px;color:#262626;font-weight:700;width:22px;text-align:right">4</div>
<div class="a" style="left:58px;top:404px;font-size:11px;color:#262626;width:22px;text-align:right">5</div>
<div class="a" style="left:81px;top:404px;font-size:11px;color:#262626;font-weight:700;width:22px;text-align:right">6</div>
<div class="a" style="left:104px;top:404px;font-size:11px;color:#262626;font-weight:700;width:22px;text-align:right">7</div>
<div class="a" style="left:127px;top:404px;font-size:11px;color:#262626;width:22px;text-align:right">8</div>
<div class="a" style="left:150px;top:404px;font-size:11px;color:#262626;width:22px;text-align:right">9</div>
<div class="a" style="left:173px;top:404px;font-size:11px;color:#262626;width:22px;text-align:right">10</div>
<div class="a" style="left:20px;top:426.5px;font-size:7px;color:#777;width:15px;text-align:right">24</div>
<div class="a" style="left:35px;top:425px;font-size:11px;color:#262626;font-weight:700;width:22px;text-align:right">11</div>
<div class="a" style="left:58px;top:425px;font-size:11px;color:#262626;width:22px;text-align:right">12</div>
<div class="a" style="left:81px;top:425px;font-size:11px;color:#262626;font-weight:700;width:22px;text-align:right">13</div>
<div class="a" style="left:104px;top:425px;font-size:11px;color:#262626;font-weight:700;width:22px;text-align:right">14</div>
<div class="a" style="left:127px;top:425px;font-size:11px;color:#262626;font-weight:700;width:22px;text-align:right">15</div>
<div style="position:absolute;left:154px;top:420px;width:22px;height:20px;background:#CDE6F7;"></div>
<div class="a" style="left:150px;top:425px;font-size:11px;color:#262626;width:22px;text-align:right">16</div>
<div class="a" style="left:173px;top:425px;font-size:11px;color:#262626;width:22px;text-align:right">17</div>
<div class="a" style="left:20px;top:447.5px;font-size:7px;color:#777;width:15px;text-align:right">25</div>
<div class="a" style="left:35px;top:446px;font-size:11px;color:#262626;font-weight:700;width:22px;text-align:right">18</div>
<div class="a" style="left:58px;top:446px;font-size:11px;color:#262626;width:22px;text-align:right">19</div>
<div class="a" style="left:81px;top:446px;font-size:11px;color:#262626;font-weight:700;width:22px;text-align:right">20</div>
<div class="a" style="left:104px;top:446px;font-size:11px;color:#262626;width:22px;text-align:right">21</div>
<div class="a" style="left:127px;top:446px;font-size:11px;color:#262626;font-weight:700;width:22px;text-align:right">22</div>
<div class="a" style="left:150px;top:446px;font-size:11px;color:#262626;width:22px;text-align:right">23</div>
<div class="a" style="left:173px;top:446px;font-size:11px;color:#262626;width:22px;text-align:right">24</div>
<svg style="position:absolute;left:250px;top:176px" width="6" height="10" viewBox="0 0 6 10"><path d="M5.5 0 V9.5 L0 4.75 Z" fill="#555"/></svg>
<svg style="position:absolute;left:275px;top:176px" width="6" height="10" viewBox="0 0 6 10"><path d="M0 0 V9.5 L5.5 4.75 Z" fill="#555"/></svg>
<div class="a" style="left:304px;top:172px;font-size:20px;color:#4A4A4A;letter-spacing:-0.55px">16. juni 2018</div>
<div class="a" style="left:774px;top:175px;font-size:12px;color:#474747;font-weight:700;letter-spacing:-0.35px">Tønsberg, Vestfold</div>
<svg style="position:absolute;left:887px;top:180px" width="5" height="3" viewBox="0 0 5 3"><path d="M0 0 H5 L2.5 3 Z" fill="#555"/></svg>
<svg style="position:absolute;left:917px;top:168px" width="20" height="20" viewBox="0 0 20 20"><g transform="translate(10,9.5)" fill="#F4C200"><path d="M-2.6 -5 L0 -10.3 L2.6 -5 Z" transform="rotate(0)"/><path d="M-2.6 -5 L0 -10.3 L2.6 -5 Z" transform="rotate(45)"/><path d="M-2.6 -5 L0 -10.3 L2.6 -5 Z" transform="rotate(90)"/><path d="M-2.6 -5 L0 -10.3 L2.6 -5 Z" transform="rotate(135)"/><path d="M-2.6 -5 L0 -10.3 L2.6 -5 Z" transform="rotate(180)"/><path d="M-2.6 -5 L0 -10.3 L2.6 -5 Z" transform="rotate(225)"/><path d="M-2.6 -5 L0 -10.3 L2.6 -5 Z" transform="rotate(270)"/><path d="M-2.6 -5 L0 -10.3 L2.6 -5 Z" transform="rotate(315)"/><circle r="5.8" fill="#FFE887"/><circle r="4.5" fill="#F4C200"/></g></svg>
<div class="a" style="left:949px;top:169px;font-size:12px;color:#3B3B3B">I dag</div>
<div class="a" style="left:949px;top:183px;font-size:12px;color:#3B3B3B;font-weight:700;letter-spacing:-0.42px">26° C / 14° C</div>
<svg style="position:absolute;left:0px;top:0px" width="1132" height="466" viewBox="0 0 1132 466"><g transform="translate(1052,176.5)" fill="#F4C200"><path d="M-2.2 -4.2 L0 -8 L2.2 -4.2 Z" transform="rotate(0)"/><path d="M-2.2 -4.2 L0 -8 L2.2 -4.2 Z" transform="rotate(45)"/><path d="M-2.2 -4.2 L0 -8 L2.2 -4.2 Z" transform="rotate(90)"/><path d="M-2.2 -4.2 L0 -8 L2.2 -4.2 Z" transform="rotate(135)"/><path d="M-2.2 -4.2 L0 -8 L2.2 -4.2 Z" transform="rotate(180)"/><path d="M-2.2 -4.2 L0 -8 L2.2 -4.2 Z" transform="rotate(225)"/><path d="M-2.2 -4.2 L0 -8 L2.2 -4.2 Z" transform="rotate(270)"/><path d="M-2.2 -4.2 L0 -8 L2.2 -4.2 Z" transform="rotate(315)"/><circle r="4.9" fill="#F4C200"/></g><path d="M1034.8 185.2 Q1031.6 185.2 1032 182 Q1032.5 179.3 1035.6 179.6 Q1036.8 174.3 1041.6 174.3 Q1046 174.3 1047.2 178.2 Q1051.6 177.8 1051.9 181.6 Q1052 185.2 1049 185.2 Z" fill="#fff" stroke="#757575" stroke-width="1.1"/></svg>
<div class="a" style="left:1068px;top:169px;font-size:12px;color:#3B3B3B">I morgen</div>
<div class="a" style="left:1068px;top:183px;font-size:12px;color:#3B3B3B;font-weight:700;letter-spacing:-0.42px">27° C / 15° C</div>
<div style="position:absolute;left:319px;top:207px;width:813px;height:25px;background:#DEF0FB;"></div>
<div class="a" style="left:330px;top:214px;font-size:12px;color:#3B3B3B;letter-spacing:-0.75px">LØRDAG</div>
<div style="position:absolute;left:319px;top:232px;width:1px;height:71px;background:#E4E4E4;"></div>
<div class="a" style="left:328px;top:240px;font-size:14px;color:#3B3B3B;letter-spacing:-0.6px;transform:scaleY(1.12);transform-origin:0 0">16</div>
<svg style="position:absolute;left:232px;top:262px" width="88" height="26" viewBox="0 0 88 26"><defs><filter id="sh" x="-20%" y="-50%" width="140%" height="200%"><feDropShadow dx="0" dy="2" stdDeviation="1.3" flood-color="#000" flood-opacity="0.35"/></filter></defs><g fill="#E8795A" filter="url(#sh)"><path d="M4.3 12.8 L15.2 7.3 L13.8 12.8 L15 18.3 Z"/><path d="M80.1 12.8 L69.2 7.3 L70.6 12.8 L69.4 18.3 Z"/><rect x="18" y="11.2" width="3.4" height="3.4"/><rect x="26" y="11.2" width="3.4" height="3.4"/><rect x="34" y="11.2" width="3.4" height="3.4"/><rect x="42" y="11.2" width="3.4" height="3.4"/><rect x="50" y="11.2" width="3.4" height="3.4"/><rect x="58" y="11.2" width="3.4" height="3.4"/><rect x="66" y="11.2" width="3.4" height="3.4"/></g></svg>
<div class="a" style="left:240px;top:291px;font-size:11px;color:#555;letter-spacing:-0.7px">USA</div>
<div class="a" style="left:280px;top:291px;font-size:11px;color:#555;letter-spacing:0.3px">Norge</div>
<div style="position:absolute;left:319px;top:303px;width:813px;height:163px;background:#EFEFEF;"></div>
<div style="position:absolute;left:319px;top:303px;width:813px;height:1px;background:#DADADA;"></div>
<div style="position:absolute;left:237px;top:303px;width:82px;height:1px;background:#D9D9D9;"></div>
<div style="position:absolute;left:276px;top:304px;width:1px;height:162px;background:#555;"></div>
<div class="a" style="left:244px;top:308.5px;font-size:14px;color:#595959;letter-spacing:-0.6px;transform:scaleY(1.12);transform-origin:0 0">01</div>
<div class="a" style="left:283px;top:308.5px;font-size:14px;color:#595959;letter-spacing:-0.6px;transform:scaleY(1.12);transform-origin:0 0">08</div>
<div style="position:absolute;left:319px;top:326px;width:813px;height:1px;background:repeating-linear-gradient(90deg,#E4E4E4 0 2px,transparent 2px 4px)"></div>
<div style="position:absolute;left:237px;top:349px;width:39px;height:1px;background:#D9D9D9;"></div>
<div style="position:absolute;left:277px;top:349px;width:42px;height:1px;background:#D9D9D9;"></div>
<div style="position:absolute;left:319px;top:349px;width:813px;height:1px;background:#DCDCDC;"></div>
<div class="a" style="left:244px;top:354.5px;font-size:14px;color:#595959;letter-spacing:-0.6px;transform:scaleY(1.12);transform-origin:0 0">02</div>
<div class="a" style="left:283px;top:354.5px;font-size:14px;color:#595959;letter-spacing:-0.6px;transform:scaleY(1.12);transform-origin:0 0">09</div>
<div style="position:absolute;left:319px;top:372px;width:813px;height:1px;background:repeating-linear-gradient(90deg,#E4E4E4 0 2px,transparent 2px 4px)"></div>
<div style="position:absolute;left:237px;top:395px;width:39px;height:1px;background:#D9D9D9;"></div>
<div style="position:absolute;left:277px;top:395px;width:42px;height:1px;background:#D9D9D9;"></div>
<div style="position:absolute;left:319px;top:395px;width:813px;height:1px;background:#DCDCDC;"></div>
<div class="a" style="left:244px;top:400.5px;font-size:14px;color:#595959;letter-spacing:-0.6px;transform:scaleY(1.12);transform-origin:0 0">03</div>
<div class="a" style="left:283px;top:400.5px;font-size:14px;color:#595959;letter-spacing:-0.6px;transform:scaleY(1.12);transform-origin:0 0">10</div>
<div style="position:absolute;left:319px;top:418px;width:813px;height:1px;background:repeating-linear-gradient(90deg,#E4E4E4 0 2px,transparent 2px 4px)"></div>
<div style="position:absolute;left:237px;top:441px;width:39px;height:1px;background:#D9D9D9;"></div>
<div style="position:absolute;left:277px;top:441px;width:42px;height:1px;background:#D9D9D9;"></div>
<div style="position:absolute;left:319px;top:441px;width:813px;height:1px;background:#DCDCDC;"></div>
<div class="a" style="left:244px;top:446.5px;font-size:14px;color:#595959;letter-spacing:-0.6px;transform:scaleY(1.12);transform-origin:0 0">04</div>
<div class="a" style="left:283px;top:446.5px;font-size:14px;color:#595959;letter-spacing:-0.6px;transform:scaleY(1.12);transform-origin:0 0">11</div>
<div style="position:absolute;left:319px;top:464px;width:813px;height:1px;background:repeating-linear-gradient(90deg,#E4E4E4 0 2px,transparent 2px 4px)"></div>
<div style="position:absolute;left:319px;top:303px;width:1px;height:163px;background:#D4D4D4;"></div>
<div style="position:absolute;left:320px;top:464px;width:812px;height:1px;background:#BFDDF3;"></div>
<div style="position:absolute;left:320px;top:465px;width:812px;height:1px;background:#1A5C9E;"></div>
</body></html>
